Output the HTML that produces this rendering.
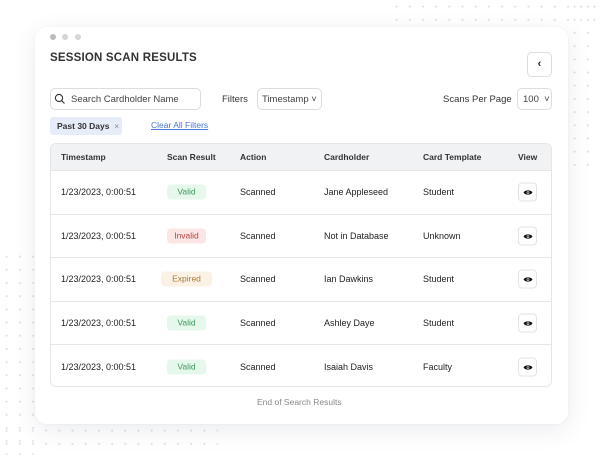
<!DOCTYPE html>
<html><head><meta charset="utf-8"><style>
*{box-sizing:border-box;margin:0;padding:0}
body{width:600px;height:455px;background:#fff;position:relative;overflow:hidden;font-family:"Liberation Sans",sans-serif;color:#222}
.dots{position:absolute;background-image:radial-gradient(circle,#dcdee3 0.8px,transparent 1.2px);background-size:13.2px 13.2px}
.card{position:absolute;left:35px;top:27px;width:533px;height:397px;background:#fff;border-radius:12px;box-shadow:0 6px 24px rgba(60,70,100,.10),0 0 3px rgba(0,0,0,.04)}
.a{position:absolute;font-size:9.5px;white-space:nowrap}
.dot{position:absolute;top:34px;width:6px;height:6px;border-radius:50%;background:#d6d6d8}
.tbl{position:absolute;left:50px;top:143px;width:502px;height:244px;border:1px solid #e4e6ea;border-radius:6px;overflow:hidden}
.hdr{position:absolute;left:0;top:0;width:100%;height:27px;background:#f1f2f4;border-bottom:1px solid #e4e6ea}
.row{position:absolute;left:0;width:100%;height:43.6px;border-bottom:1px solid #e6e7ea}
.c{position:absolute;top:50%;transform:translateY(-50%);font-size:9px;white-space:nowrap;color:#222}
.h{font-weight:bold;font-size:8.5px;color:#333}
.b{position:absolute;top:50%;transform:translateY(-50%);height:15px;border-radius:4px;font-size:8.5px;line-height:15px;text-align:center}
.eye{position:absolute;left:467px;top:50%;transform:translateY(-50%);width:19px;height:19px;border:1px solid #e2e3e6;border-radius:4px}
.eye svg{position:absolute;left:4px;top:4px}
</style></head><body>
<div class="dots" style="left:390px;top:0;width:210px;height:28px"></div>
<div class="dots" style="left:568px;top:0;width:32px;height:175px"></div>
<div class="dots" style="left:0;top:250px;width:36px;height:205px"></div>
<div class="dots" style="left:0;top:424px;width:218px;height:31px"></div>
<div class="card"></div>
<div class="dot" style="left:50px;background:#bbb"></div><div class="dot" style="left:62px"></div><div class="dot" style="left:75px"></div>
<div class="a" style="left:50px;top:52px;font-size:11.5px;font-weight:bold;color:#333;letter-spacing:.2px">SESSION SCAN RESULTS</div>
<div style="position:absolute;left:527px;top:52px;width:25px;height:25px;border:1px solid #dcdde0;border-radius:5px;font-size:11px;text-align:center;line-height:23px;font-weight:bold;color:#223">‹</div>
<div style="position:absolute;left:50px;top:88px;width:151px;height:22px;border:1px solid #dcdde0;border-radius:5px"></div>
<svg style="position:absolute;left:54px;top:93px" width="12" height="12" viewBox="0 0 12 12"><circle cx="5" cy="5" r="3.6" fill="none" stroke="#333" stroke-width="1.1"/><path d="M7.7 7.7L10.5 10.5" stroke="#333" stroke-width="1.1"/></svg>
<div class="a" style="left:71px;top:94px;color:#444">Search Cardholder Name</div>
<div class="a" style="left:222px;top:94px;color:#333">Filters</div>
<div style="position:absolute;left:257px;top:88px;width:65px;height:22px;border:1px solid #dcdde0;border-radius:5px"></div>
<div class="a" style="left:262px;top:94px;color:#444">Timestamp ˅</div>
<div class="a" style="left:443px;top:94px;color:#333">Scans Per Page</div>
<div style="position:absolute;left:517px;top:88px;width:35px;height:22px;border:1px solid #dcdde0;border-radius:5px"></div>
<div class="a" style="left:523px;top:94px;color:#444">100 &nbsp;˅</div>
<div style="position:absolute;left:50px;top:117px;width:72px;height:18px;background:#e6ecf8;border-radius:3px"></div>
<div class="a" style="left:57px;top:121px;font-size:8.5px;font-weight:bold;color:#333">Past 30 Days <span style="color:#888;font-weight:normal">&nbsp;×</span></div>
<div class="a" style="left:151px;top:120px;font-size:8.5px;color:#4a76d8;text-decoration:underline">Clear All Filters</div>
<div class="tbl">
<div class="hdr">
<span class="c h" style="left:10px">Timestamp</span><span class="c h" style="left:116px">Scan Result</span><span class="c h" style="left:189px">Action</span><span class="c h" style="left:273px">Cardholder</span><span class="c h" style="left:372px">Card Template</span><span class="c h" style="left:467px">View</span>
</div>
<div class="row" style="top:27px"><span class="c" style="left:10px">1/23/2023, 0:00:51</span><span class="b" style="left:116px;width:39px;background:#e6f7ec;color:#3a9a5a">Valid</span><span class="c" style="left:189px">Scanned</span><span class="c" style="left:273px">Jane Appleseed</span><span class="c" style="left:372px">Student</span><span class="eye"><svg width="10" height="10" viewBox="0 0 10 10"><path d="M0.5 5C2 2.2 8 2.2 9.5 5C8 7.8 2 7.8 0.5 5Z" fill="#111"/><circle cx="5" cy="5" r="1.3" fill="#fff"/><circle cx="5" cy="5" r="0.7" fill="#111"/></svg></span></div>
<div class="row" style="top:70.6px"><span class="c" style="left:10px">1/23/2023, 0:00:51</span><span class="b" style="left:116px;width:39px;background:#fbe5e5;color:#b94444">Invalid</span><span class="c" style="left:189px">Scanned</span><span class="c" style="left:273px">Not in Database</span><span class="c" style="left:372px">Unknown</span><span class="eye"><svg width="10" height="10" viewBox="0 0 10 10"><path d="M0.5 5C2 2.2 8 2.2 9.5 5C8 7.8 2 7.8 0.5 5Z" fill="#111"/><circle cx="5" cy="5" r="1.3" fill="#fff"/><circle cx="5" cy="5" r="0.7" fill="#111"/></svg></span></div>
<div class="row" style="top:114.2px"><span class="c" style="left:10px">1/23/2023, 0:00:51</span><span class="b" style="left:110px;width:51px;background:#fbf1e4;color:#a87a40">Expired</span><span class="c" style="left:189px">Scanned</span><span class="c" style="left:273px">Ian Dawkins</span><span class="c" style="left:372px">Student</span><span class="eye"><svg width="10" height="10" viewBox="0 0 10 10"><path d="M0.5 5C2 2.2 8 2.2 9.5 5C8 7.8 2 7.8 0.5 5Z" fill="#111"/><circle cx="5" cy="5" r="1.3" fill="#fff"/><circle cx="5" cy="5" r="0.7" fill="#111"/></svg></span></div>
<div class="row" style="top:157.8px"><span class="c" style="left:10px">1/23/2023, 0:00:51</span><span class="b" style="left:116px;width:39px;background:#e6f7ec;color:#3a9a5a">Valid</span><span class="c" style="left:189px">Scanned</span><span class="c" style="left:273px">Ashley Daye</span><span class="c" style="left:372px">Student</span><span class="eye"><svg width="10" height="10" viewBox="0 0 10 10"><path d="M0.5 5C2 2.2 8 2.2 9.5 5C8 7.8 2 7.8 0.5 5Z" fill="#111"/><circle cx="5" cy="5" r="1.3" fill="#fff"/><circle cx="5" cy="5" r="0.7" fill="#111"/></svg></span></div>
<div class="row" style="top:201.4px;border-bottom:none"><span class="c" style="left:10px">1/23/2023, 0:00:51</span><span class="b" style="left:116px;width:39px;background:#e6f7ec;color:#3a9a5a">Valid</span><span class="c" style="left:189px">Scanned</span><span class="c" style="left:273px">Isaiah Davis</span><span class="c" style="left:372px">Faculty</span><span class="eye"><svg width="10" height="10" viewBox="0 0 10 10"><path d="M0.5 5C2 2.2 8 2.2 9.5 5C8 7.8 2 7.8 0.5 5Z" fill="#111"/><circle cx="5" cy="5" r="1.3" fill="#fff"/><circle cx="5" cy="5" r="0.7" fill="#111"/></svg></span></div>
</div>
<div class="a" style="left:257px;top:397px;font-size:8.5px;color:#888">End of Search Results</div>
</body></html>
